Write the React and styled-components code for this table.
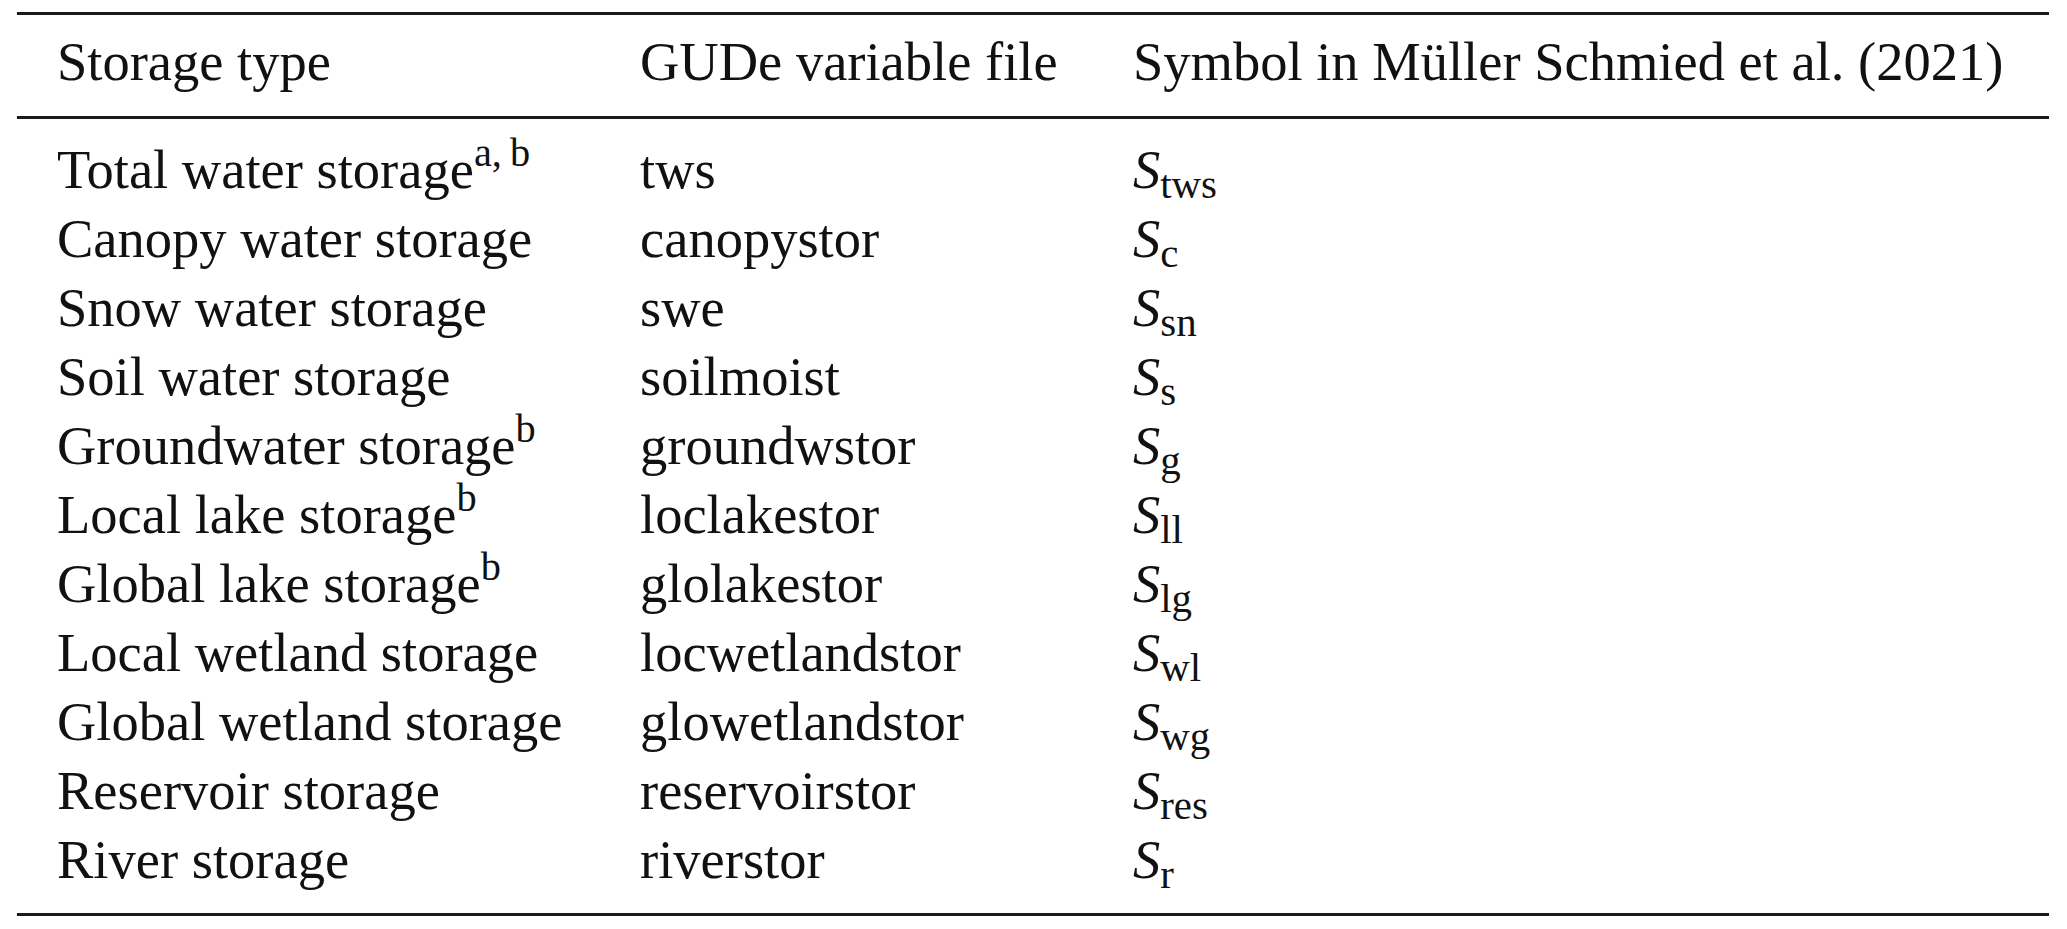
import React from "react";
import styled, { createGlobalStyle } from "styled-components";

const GlobalStyle = createGlobalStyle`
  html, body {
    margin: 0;
    padding: 0;
    background: #ffffff;
  }
  body {
    font-family: "Liberation Serif", "Times New Roman", serif;
    color: #111111;
  }
`;

const Page = styled.div`
  padding: 12px 0 0 17px;
`;

const Table = styled.div`
  width: 2032px;
  display: grid;
  grid-template-columns: 583px 493px 1fr;
  border-top: 3px solid #1a1a1a;
  border-bottom: 3px solid #1a1a1a;
  padding-bottom: 19px;
  font-size: 54.5px;
  line-height: 69px;
`;

const Head = styled.div`
  display: contents;
`;

const HeadCell = styled.div`
  padding: 12px 0 20px 40px;
  border-bottom: 3px solid #1a1a1a;
  white-space: nowrap;
`;

const Cell = styled.div`
  padding-left: 40px;
  padding-top: ${({ first }) => (first ? "16px" : "0")};
  white-space: nowrap;
`;

const Sup = styled.span`
  font-size: 0.74em;
  line-height: 0;
  vertical-align: 0.55em;
`;

const Sym = styled.span`
  font-style: italic;
`;

const Sub = styled.span`
  font-size: 0.75em;
  line-height: 0;
  vertical-align: -0.24em;
`;

const rows = [
  { name: "Total water storage", note: "a,\u2009b", file: "tws", sub: "tws" },
  { name: "Canopy water storage", file: "canopystor", sub: "c" },
  { name: "Snow water storage", file: "swe", sub: "sn" },
  { name: "Soil water storage", file: "soilmoist", sub: "s" },
  { name: "Groundwater storage", note: "b", file: "groundwstor", sub: "g" },
  { name: "Local lake storage", note: "b", file: "loclakestor", sub: "ll" },
  { name: "Global lake storage", note: "b", file: "glolakestor", sub: "lg" },
  { name: "Local wetland storage", file: "locwetlandstor", sub: "wl" },
  { name: "Global wetland storage", file: "glowetlandstor", sub: "wg" },
  { name: "Reservoir storage", file: "reservoirstor", sub: "res" },
  { name: "River storage", file: "riverstor", sub: "r" }
];

export default function App() {
  return (
    <Page>
      <GlobalStyle />
      <Table>
        <Head>
          <HeadCell>Storage type</HeadCell>
          <HeadCell>GUDe variable file</HeadCell>
          <HeadCell>Symbol in Müller Schmied et al. (2021)</HeadCell>
        </Head>
        {rows.map((row, i) => (
          <React.Fragment key={row.file}>
            <Cell first={i === 0}>
              {row.name}
              {row.note && <Sup>{row.note}</Sup>}
            </Cell>
            <Cell first={i === 0}>{row.file}</Cell>
            <Cell first={i === 0}>
              <Sym>S</Sym>
              <Sub>{row.sub}</Sub>
            </Cell>
          </React.Fragment>
        ))}
      </Table>
    </Page>
  );
}
